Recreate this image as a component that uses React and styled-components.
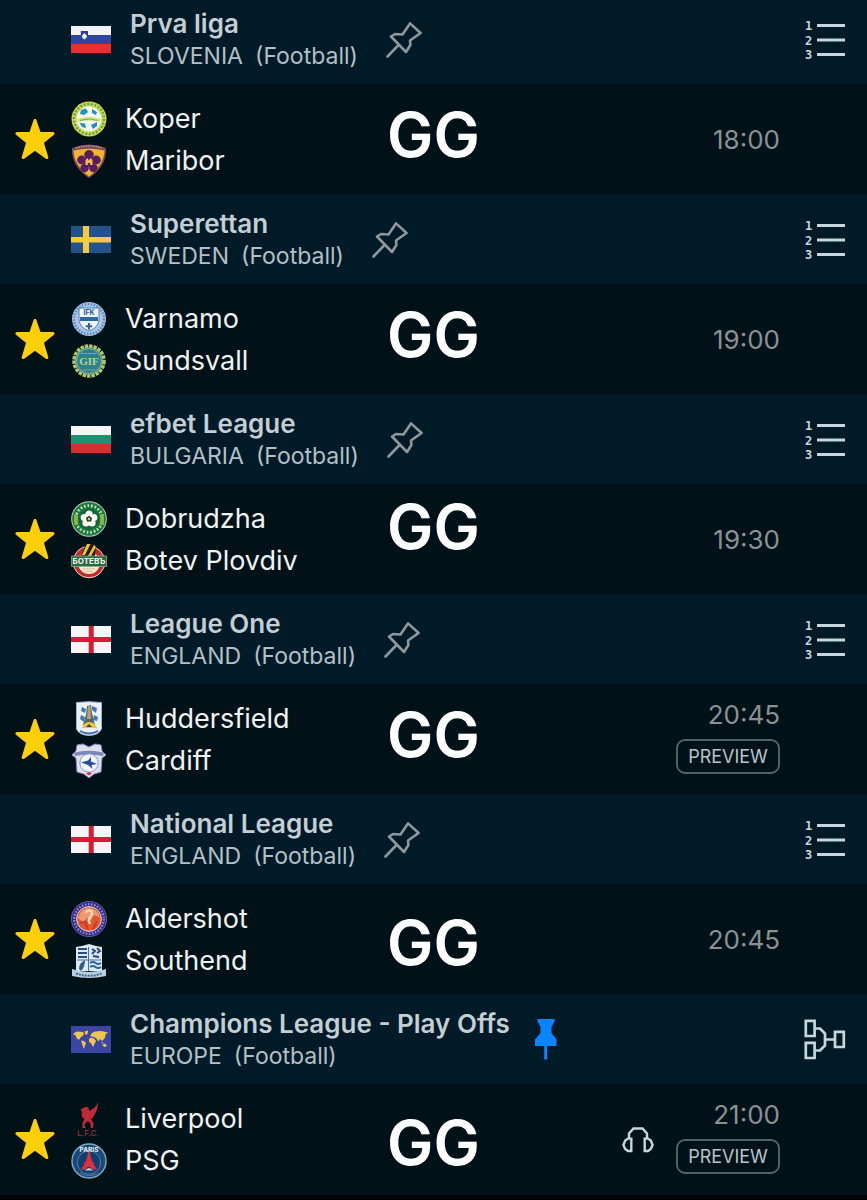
import React from "react";
import styled, { createGlobalStyle } from "styled-components";

const GlobalStyle = createGlobalStyle`
  *, *::before, *::after { box-sizing: border-box; }
  body {
    margin: 0;
    background: #000608;
    font-family: Inter, "Liberation Sans", sans-serif;
    color: #eef3f5;
  }
  button {
    padding: 0;
    border: 0;
    background: none;
    color: inherit;
    font: inherit;
    cursor: pointer;
  }
  svg { display: block; }
`;

const Page = styled.main`
  overflow: hidden;
`;

const Schedule = styled.div`
  margin-top: -5px;
`;

const LeagueHeader = styled.header`
  display: flex;
  align-items: center;
  height: 89px;
  padding: 0 21px 0 71px;
  background: #001b27;
`;

const LeagueText = styled.div`
  margin: 0 24px 0 19px;
`;

const LeagueName = styled.h2`
  margin: 0;
  font-size: 26px;
  line-height: 32px;
  font-weight: 600;
  color: #c3ced5;
  white-space: nowrap;
`;

const Country = styled.p`
  display: flex;
  gap: 12px;
  margin: 0;
  font-size: 23px;
  line-height: 32px;
  color: #b3c0c7;
`;

const PinButton = styled.button`
  color: ${(p) => (p.$pinned ? "#0a84ff" : "#8e979b")};
`;

const TableButton = styled.button`
  margin-left: auto;
  color: #c6d6dd;
`;

const MatchRow = styled.article`
  display: grid;
  grid-template-columns: 1fr auto 1fr;
  align-items: center;
  height: 111px;
  padding: 0 87px 0 15px;
  background: #001218;
`;

const MatchSide = styled.div`
  display: flex;
  align-items: center;
  gap: 16px;
`;

const Teams = styled.ul`
  display: grid;
  gap: 6px;
  margin: 0;
  padding: 0;
  list-style: none;
`;

const Team = styled.li`
  display: flex;
  align-items: center;
  gap: 18px;
  font-size: 27px;
  line-height: 36px;
  white-space: nowrap;
`;

const TipSlot = styled.div`
  display: flex;
  align-items: ${(p) => p.$align};
  height: 76px;
  margin: 0 -72px 10px 0;
`;

const Tip = styled.strong`
  font-size: 62px;
  line-height: 60px;
  font-weight: 600;
  color: #ffffff;
`;

const MatchInfo = styled.div`
  display: flex;
  justify-content: flex-end;
  align-items: center;
  gap: 22px;
`;

const Kickoff = styled.div`
  display: flex;
  flex-direction: column;
  align-items: flex-end;
  gap: 12px;
`;

const Time = styled.time`
  font-size: 26px;
  line-height: 24px;
  color: #899194;
`;

const PreviewButton = styled.button`
  width: 104px;
  height: 35px;
  margin-bottom: 2px;
  border: 2px solid #536165;
  border-radius: 9px;
  font-size: 18px;
  line-height: 20px;
  color: #b9c5ca;
`;

const StarIcon = () => (
  <svg width="40" height="42" viewBox="0 0 40 42" aria-hidden="true">
    <path
      d="M20 1.5 L24.4 14.5 L38 14.5 L27.2 23.3 L31.8 38.5 L20 30 L8.2 38.5 L12.8 23.3 L2 14.5 L15.6 14.5 Z"
      fill="#ffd00a" stroke="#ffd00a" strokeWidth="3" strokeLinejoin="round"
    />
  </svg>
);

const PinIcon = ({ pinned }) =>
  pinned ? (
    <svg width="24" height="42" viewBox="0 1 24 42" aria-hidden="true">
      <path d="M3.5 1 H20.5 V3.5 L17.5 9 V15 L22.5 21.5 V28 H13.2 V41.5 H10.2 V28 H1 V21.5 L6.5 15 V9 L3.5 3.5 Z" fill="currentColor" />
    </svg>
  ) : (
    <svg width="40" height="38" viewBox="-4 0 40 38" fill="none" stroke="currentColor" strokeWidth="2.6" aria-hidden="true">
      <path d="M24 2.4 L34.6 12 L24 19.5 L24.4 24 L20 31 L5 15.5 L9 13 L16.5 13.5 Z M13 23.5 L1.5 35.5" strokeLinejoin="round" strokeLinecap="round" />
    </svg>
  );

const StandingsIcon = () => (
  <svg width="44" height="50" viewBox="-2 -5 44 50" aria-hidden="true">
    <g fill="currentColor" fontFamily="DejaVu Sans Mono, monospace" fontSize="12" fontWeight="700">
      <text x="1" y="10">1</text>
      <text x="1" y="24.5">2</text>
      <text x="1" y="39">3</text>
    </g>
    <path d="M13 5.5 H41 M13 20 H41 M13 34.5 H41" stroke="currentColor" strokeWidth="2.8" />
  </svg>
);

const BracketIcon = () => (
  <svg width="42" height="42" viewBox="0 0 42 42" fill="none" stroke="currentColor" strokeWidth="2.7" aria-hidden="true">
    <path d="M1.8 1.8 H10.6 V17 H1.8 Z M1.8 23.8 H10.6 V39 H1.8 Z M31 12.8 H39.8 V28 H31 Z M11 9.5 H16 L21 14.5 V26.5 L16 31.5 H11 M21 20.5 H31" />
  </svg>
);

const HeadphonesIcon = () => (
  <svg width="32" height="28" viewBox="0 0 32 28" fill="none" stroke="#c6d6dd" strokeWidth="2.4" role="img" aria-label="Audio commentary">
    <path d="M7 12 V7.5 L11.5 2.5 H20.5 L25 7.5 V12 M9.3 12.6 V25 H6 L3.2 23 L1.4 19 L3.2 14.6 L6 12.6 Z M22.7 12.6 V25 H26 L28.8 23 L30.6 19 L28.8 14.6 L26 12.6 Z" />
  </svg>
);

const flags = {
  Slovenia: (
    <>
      <path d="M0 0 H40 V9 H0 Z" fill="#f4f4f8" />
      <path d="M0 9 H40 V18 H0 Z" fill="#2f459f" />
      <path d="M0 18 H40 V27 H0 Z" fill="#e8302e" />
      <path d="M9.8 5 H17 V10 Q16.5 13 13.4 14.5 Q10.3 13 9.8 10 Z" fill="#2c3f96" />
      <path d="M10.8 10 L13.4 7 L16 10 Q15.6 12.4 13.4 13.6 Q11.2 12.4 10.8 10 Z" fill="#fff" />
    </>
  ),
  Sweden: (
    <>
      <path d="M0 0 H40 V27 H0 Z" fill="#225489" />
      <path d="M0 11 H40 V16.5 H0 Z M12 0 H18 V27 H12 Z" fill="#f6cb40" />
    </>
  ),
  Bulgaria: (
    <>
      <path d="M0 0 H40 V9 H0 Z" fill="#f5f6f5" />
      <path d="M0 9 H40 V18 H0 Z" fill="#1d9270" />
      <path d="M0 18 H40 V27 H0 Z" fill="#d2312d" />
    </>
  ),
  England: (
    <>
      <path d="M0 0 H40 V27 H0 Z" fill="#f7f4f7" />
      <path d="M0 11 H40 V16 H0 Z M17.7 0 H22.7 V27 H17.7 Z" fill="#cf2036" />
    </>
  ),
  Europe: (
    <>
      <path d="M0 0 H40 V27 H0 Z" fill="#3c45a3" />
      <g fill="#f0c74e">
        <path d="M3 7 L6 5.5 L12 6 L13 8 L11.5 10 L9 12 L8 14 L5.5 12 L4.5 9 L2.5 9 Z" />
        <path d="M13.5 5.5 L17 4.5 L16.5 8 L14.5 9 Z" />
        <path d="M10 14.5 L13 15 L15 17 L13.5 21 L12.5 23 L11.5 19 Z" />
        <path d="M18 13 L20 11.5 L23 12.5 L25 15 L23.5 18 L22 21 L20.5 18 L18 15.5 Z" />
        <path d="M19 10 L21 7 L24 5.5 L30 5 L37 6.5 L34.5 8.5 L34 12 L31 15 L29 13 L27.5 15.5 L25 12 L22 10.8 Z" />
        <path d="M31 19 L34 17.5 L36 20 L33.5 21 Z M30 16 L33 17 L31 17.6 Z" />
      </g>
    </>
  ),
};

const Flag = ({ name }) => (
  <svg width="40" height="27" viewBox="0 0 40 27" role="img" aria-label={`Flag of ${name}`}>
    {flags[name]}
  </svg>
);

const crests = {
  Koper: (
    <>
      <circle cx="18" cy="18" r="17.5" fill="#d3d848" />
      <circle cx="18" cy="18" r="15" fill="none" stroke="#5aa35a" strokeWidth="2.4" strokeDasharray="2 1.6" />
      <circle cx="18" cy="18" r="12.4" fill="#eef8f4" />
      <path d="M10 9 L15 7.5 L17 11 L13 14 L9 13 Z M21 8 L26 11 L25 14 L21 12 Z M8.5 22 L14 22.5 L15 27 L11 26 Z M20 24 L26 21 L26 25 L22 28 Z" fill="#278fb8" />
      <path d="M6 18 Q18 14 30 18 L29 21 Q18 18 7 21 Z" fill="#dfe070" />
      <path d="M9 19.4 Q18 16.4 27 19.4" stroke="#5fae93" fill="none" />
    </>
  ),
  Maribor: (
    <>
      <path d="M1 5 Q18 -2 35 5 Q36 23 18 35 Q0 23 1 5 Z" fill="#7f4b56" />
      <path d="M2.5 7.5 Q18 4 33.5 7.5 Q33 22 18 33.5 Q3 22 2.5 7.5 Z" fill="#f3b52e" />
      <path d="M5 4.8 Q18 1 31 4.8" stroke="#bda0a0" strokeWidth="1.2" strokeDasharray="1.5 1" fill="none" />
      <g fill="#571d60">
        <circle cx="18" cy="11.8" r="4.8" />
        <circle cx="10.6" cy="17" r="4.4" />
        <circle cx="25.4" cy="17" r="4.4" />
        <circle cx="13.6" cy="25" r="4.2" />
        <circle cx="22.4" cy="25" r="4.2" />
        <circle cx="18" cy="19" r="5" />
      </g>
      <path d="M14.5 22 V17 L16.5 15 L18 17.5 L19.5 15 L21.5 17 V22 H19.2 V20 H16.8 V22 Z" fill="#f3c04a" />
    </>
  ),
  Varnamo: (
    <>
      <circle cx="18" cy="18" r="17" fill="#a9c6e6" />
      <circle cx="18" cy="18" r="15" fill="none" stroke="#5d87bb" strokeWidth="2.6" strokeDasharray="1.5 1.5" />
      <path d="M8 7 H28 V19 Q27 27 18 30 Q9 27 8 19 Z" fill="#edf4fb" stroke="#4c7fbc" />
      <path d="M9 16 H27 V20 H9 Z" fill="#286aa9" />
      <path d="M18 22 V28.5 M14.8 25.2 H21.2" stroke="#345f9f" strokeWidth="2" />
      <text x="18" y="14" textAnchor="middle" fontSize="7" fontWeight="700" fill="#315487">IFK</text>
    </>
  ),
  Sundsvall: (
    <>
      <circle cx="18" cy="18" r="14.6" fill="#2b8192" />
      <circle cx="18" cy="18" r="15" fill="none" stroke="#b3c46a" strokeWidth="3.6" strokeDasharray="3.4 1" />
      <circle cx="18" cy="18" r="12.4" fill="none" stroke="#8fb67c" />
      <path d="M10 10.5 H26 M12 27 H24" stroke="#78a99a" />
      <text x="18" y="22" textAnchor="middle" fontSize="11" fontWeight="700" fontFamily="Liberation Serif, serif" fill="#b9d489">GIF</text>
    </>
  ),
  Dobrudzha: (
    <>
      <circle cx="18" cy="18" r="17.8" fill="#b8d8bd" />
      <circle cx="18" cy="18" r="16.8" fill="#19773f" />
      <circle cx="18" cy="18" r="13.4" fill="none" stroke="#c4e0bd" strokeWidth="2.8" strokeDasharray="1.7 1.9" />
      <path d="M5 13 V24 M31 13 V24" stroke="#8eb83d" strokeWidth="3.6" />
      <circle cx="18" cy="18" r="10.2" fill="#156436" />
      <g fill="#f7faf5">
        <circle cx="18" cy="13" r="3.6" />
        <circle cx="22.8" cy="16.5" r="3.6" />
        <circle cx="21" cy="22" r="3.6" />
        <circle cx="15" cy="22" r="3.6" />
        <circle cx="13.2" cy="16.5" r="3.6" />
      </g>
      <path d="M18 14.8 L21 17 L20 20.6 H16 L15 17 Z" fill="#172c1c" />
      <circle cx="18" cy="18" r="1.4" fill="#d9bd55" />
    </>
  ),
  "Botev Plovdiv": (
    <>
      <circle cx="18" cy="19" r="15.8" fill="#c42a2c" stroke="#e9d4c4" />
      <circle cx="18" cy="20" r="11" fill="#f3ead3" />
      <path d="M15 1 L25 1 L24 13 L10 13 Z" fill="#1b1a16" />
      <path d="M16 1 H19.5 L14 12 L11 12 Z M23 2 L25 4 L20 13 H17 Z" fill="#f2c329" />
      <path d="M0.5 13 H35.5 V23.5 H0.5 Z" fill="#286a43" stroke="#8cae92" strokeWidth=".8" />
      <text x="18" y="21.3" textAnchor="middle" fontSize="8" fontWeight="700" fill="#f1f5ee">БОТЕВЪ</text>
      <path d="M12 26 H24 M14 28.5 H22" stroke="#dfbd8b" />
    </>
  ),
  Huddersfield: (
    <>
      <path d="M5.5 1.5 Q18 0 30.5 1.5 V28 Q28 34 18 34.5 Q8 34 5.5 28 Z" fill="#e9f0f7" stroke="#9fb3d0" />
      <path d="M9 30 Q18 35 27 30" stroke="#466ca4" strokeWidth="2" fill="none" />
      <path d="M11 6 L15 8 L14 12 L10 10 Z M21 5 L26 7 L25 12 L21 9 Z M10 14 L14 16 L13 21 L9 18 Z M23 14 L27 16 L26 20 L22 19 Z" fill="#3c79b5" />
      <path d="M16 5 L20 4 L21 12 L24 24 H12 L15 14 Z" fill="#53656f" />
      <path d="M17 5 L19.5 5 L20 18 L16 18 Z" fill="#b5a16a" />
      <path d="M11 27 Q13 21 18 21 Q24 21 26 27 Z" fill="#ebc837" />
      <path d="M15 26 L18 23 L21 26 Z" fill="#37434c" />
    </>
  ),
  Cardiff: (
    <>
      <path d="M6 2 L12 1 L18 4 L24 1 L30 2 L31 8 L35 12 L31 15 L30 29 L23 31 L18 35 L13 31 L6 29 L5 15 L1 12 L5 8 Z" fill="#dfe0ef" stroke="#8289bd" />
      <path d="M3 9.5 Q18 6 33 9.5 L32 13 Q18 10 4 13 Z" fill="#7b88b8" />
      <circle cx="18" cy="20" r="9.2" fill="#f3f4fb" stroke="#8d93bf" />
      <path d="M10 19.5 L17 17.5 L20 14 L20 18.5 L26 21 L20.5 22 L21.5 26 L17 22 Z" fill="#25509f" />
      <path d="M15 30.5 L18 29 L21 30.5 L18 32.5 Z" fill="#cb3552" />
    </>
  ),
  Aldershot: (
    <>
      <circle cx="18" cy="18" r="17.6" fill="#302a88" stroke="#8e8ac4" strokeWidth=".6" />
      <circle cx="18" cy="18" r="14.8" fill="none" stroke="#958fd0" strokeWidth="2.2" strokeDasharray="1.6 1.5" />
      <circle cx="18" cy="18" r="12.4" fill="#e5582f" stroke="#e7dbe2" />
      <path d="M7 17 Q10 7 18 7 Q27 8 29 17 Q25 13 22 15 L20 20 L16 17 L12 21 Z" fill="#f09a72" />
      <path d="M14.5 12 Q17 8 20.5 10 Q22 14 18.5 17 Q16.5 20 19.5 23" stroke="#f8dcc0" strokeWidth="2.2" fill="none" />
      <path d="M9 22 L14 21 L17 28 M22 28 L26 20" stroke="#c93a2a" strokeWidth="2" fill="none" />
    </>
  ),
  Southend: (
    <>
      <path d="M5 4 L11 3 L18 1 L25 3 L31 4 V28 H5 Z" fill="#dce9f4" />
      <path d="M7 6 H16 M7 10 H16 M7 14 H16" stroke="#245081" strokeWidth="1.8" />
      <path d="M17.5 4 V28 M6 17 H30" stroke="#47729d" />
      <path d="M21 6 L24 8 L21 11 M26 5 L29 8 L26 10 M22 13 L28 14" stroke="#23466f" strokeWidth="1.8" fill="none" />
      <path d="M19 20 Q22 18 24.5 20 T30 20 M19 24 Q22 22 24.5 24 T30 24" stroke="#2e6599" strokeWidth="2" fill="none" />
      <path d="M8 26 Q8 20 14 17 Q14 24 10 28 Z" fill="#315c86" />
      <path d="M1 26 Q18 32 35 26 V33 Q18 37 1 33 Z" fill="#b8cfe2" />
      <path d="M5 30.5 Q18 35 31 30.5" stroke="#416b91" strokeWidth="2" strokeDasharray="2 1" fill="none" />
    </>
  ),
  Liverpool: (
    <>
      <path d="M27 1 Q27 9 23.5 13.5 Q22 17 20 18.5 L22.5 22 L22 27 H19.8 L19.5 22.5 L17 20 L13.5 23 L14.5 27 H11.5 L11.5 22 L13.5 18 Q9.5 16 11 11 L9.5 8.5 L13 6.5 L17 6 L18.5 10 Q25 7 27 1 Z" fill="#bf2a38" />
      <text x="17" y="34.5" textAnchor="middle" fontSize="8" fill="#a93340">L.F.C.</text>
    </>
  ),
  PSG: (
    <>
      <circle cx="18" cy="18" r="17" fill="#164a7d" stroke="#88a7bd" strokeWidth="1.4" />
      <circle cx="18" cy="19.5" r="11.6" fill="#123d6d" stroke="#5f8fae" strokeWidth=".8" />
      <path d="M17 9 H19 Q19.5 18 26 26.5 H21.5 Q18 20.5 14.5 26.5 H10 Q16.5 18 17 9 Z" fill="#e1303d" />
      <path d="M13 20.5 H23" stroke="#e1303d" strokeWidth="1.8" />
      <path d="M14 27.5 Q18 22.5 22 27.5 Z" fill="#b8ccd6" />
      <path d="M9 30 Q18 35 27 30" stroke="#6f9ab8" strokeDasharray="2 1" fill="none" />
      <text x="18" y="8.5" textAnchor="middle" fontSize="6.5" fontWeight="700" fill="#e9f1f5">PARIS</text>
    </>
  ),
};

const Crest = ({ team }) => (
  <svg width="36" height="36" viewBox="0 0 36 36" aria-hidden="true">
    {crests[team]}
  </svg>
);

const fixtures = [
  { league: "Prva liga", country: "Slovenia", teams: ["Koper", "Maribor"], time: "18:00", tipAlign: "center" },
  { league: "Superettan", country: "Sweden", teams: ["Varnamo", "Sundsvall"], time: "19:00", tipAlign: "center" },
  { league: "efbet League", country: "Bulgaria", teams: ["Dobrudzha", "Botev Plovdiv"], time: "19:30", tipAlign: "flex-start" },
  { league: "League One", country: "England", teams: ["Huddersfield", "Cardiff"], time: "20:45", preview: true, tipAlign: "center" },
  { league: "National League", country: "England", teams: ["Aldershot", "Southend"], time: "20:45", tipAlign: "flex-end" },
  {
    league: "Champions League - Play Offs", country: "Europe", teams: ["Liverpool", "PSG"], time: "21:00",
    preview: true, audio: true, pinned: true, knockout: true, tipAlign: "flex-end",
  },
];

const Fixture = ({ league, country, teams, time, preview, audio, pinned, knockout, tipAlign }) => (
  <section>
    <LeagueHeader>
      <Flag name={country} />
      <LeagueText>
        <LeagueName>{league}</LeagueName>
        <Country>
          <span>{country.toUpperCase()}</span>
          <span>(Football)</span>
        </Country>
      </LeagueText>
      <PinButton type="button" $pinned={pinned} aria-pressed={!!pinned} aria-label={`Pin ${league}`}>
        <PinIcon pinned={pinned} />
      </PinButton>
      <TableButton type="button" aria-label={knockout ? "Draw" : "Standings"}>
        {knockout ? <BracketIcon /> : <StandingsIcon />}
      </TableButton>
    </LeagueHeader>
    <MatchRow>
      <MatchSide>
        <button type="button" aria-pressed="true" aria-label={`Favourite ${teams.join(" v ")}`}>
          <StarIcon />
        </button>
        <Teams>
          {teams.map((team) => (
            <Team key={team}>
              <Crest team={team} />
              {team}
            </Team>
          ))}
        </Teams>
      </MatchSide>
      <TipSlot $align={tipAlign}>
        <Tip>GG</Tip>
      </TipSlot>
      <MatchInfo>
        {audio && <HeadphonesIcon />}
        <Kickoff>
          <Time>{time}</Time>
          {preview && <PreviewButton type="button">PREVIEW</PreviewButton>}
        </Kickoff>
      </MatchInfo>
    </MatchRow>
  </section>
);

export default function App() {
  return (
    <>
      <GlobalStyle />
      <Page>
        <Schedule>
          {fixtures.map((fixture) => (
            <Fixture key={fixture.league} {...fixture} />
          ))}
        </Schedule>
      </Page>
    </>
  );
}
